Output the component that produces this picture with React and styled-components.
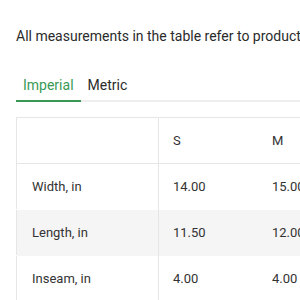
import React, { useState } from 'react'
import styled, { createGlobalStyle } from 'styled-components'

const Global = createGlobalStyle`
  body {
    margin: 0;
    background: #fff;
    font-family: Roboto, 'Liberation Sans', sans-serif;
    color: #333;
    overflow: hidden;
  }
`

const Page = styled.div`
  padding: 25px 0 0 16px;
  width: 600px;
`

const Intro = styled.p`
  margin: 0;
  font-size: 14px;
  line-height: 22px;
  white-space: nowrap;
  color: #2b2b2b;
`

const Tabs = styled.div`
  display: flex;
  margin-top: 27px;
  border-bottom: 2px solid #eeeeee;
`

const Tab = styled.button`
  background: none;
  border: none;
  padding: 0 7px 4px;
  margin-bottom: -2px;
  font-family: inherit;
  font-size: 14px;
  line-height: 22px;
  cursor: pointer;
  color: ${p => (p.active ? '#3a9a55' : '#2b2b2b')};
  border-bottom: 2px solid ${p => (p.active ? '#3a9a55' : 'transparent')};
`

const Table = styled.table`
  margin-top: 15px;
  border-collapse: collapse;
  border: 1px solid #e6e6e6;
  font-size: 13px;
  color: #333;
`

const Row = styled.tr`
  height: 46px;
  background: ${p => (p.shade ? '#f5f5f5' : '#fff')};
  border-top: 1px solid ${p => (p.head ? '#e6e6e6' : 'transparent')};
  border-bottom: ${p => (p.head ? '1px solid #e6e6e6' : 'none')};
`

const Label = styled.td`
  width: 126px;
  padding: 0 0 0 15px;
  border-right: 1px solid #e6e6e6;
  text-align: left;
`

const Cell = styled.td`
  width: 85px;
  padding: 0 0 0 14px;
  text-align: left;
`

const sizes = ['S', 'M', 'L']
const rows = [
  ['Width, in', '14.00', '15.00', '16.00'],
  ['Length, in', '11.50', '12.00', '12.50'],
  ['Inseam, in', '4.00', '4.00', '4.00']
]

export default function App() {
  const [tab, setTab] = useState('imperial')
  return (
    <Page>
      <Global />
      <Intro>All measurements in the table refer to product dimensions.</Intro>
      <Tabs>
        <Tab active={tab === 'imperial'} onClick={() => setTab('imperial')}>Imperial</Tab>
        <Tab active={tab === 'metric'} onClick={() => setTab('metric')}>Metric</Tab>
      </Tabs>
      <Table>
        <tbody>
          <Row head>
            <Label />
            {sizes.map(s => <Cell key={s}>{s}</Cell>)}
          </Row>
          {rows.map((r, i) => (
            <Row key={r[0]} shade={i === 1}>
              <Label>{r[0]}</Label>
              {r.slice(1).map((v, j) => <Cell key={j}>{v}</Cell>)}
            </Row>
          ))}
        </tbody>
      </Table>
    </Page>
  )
}
